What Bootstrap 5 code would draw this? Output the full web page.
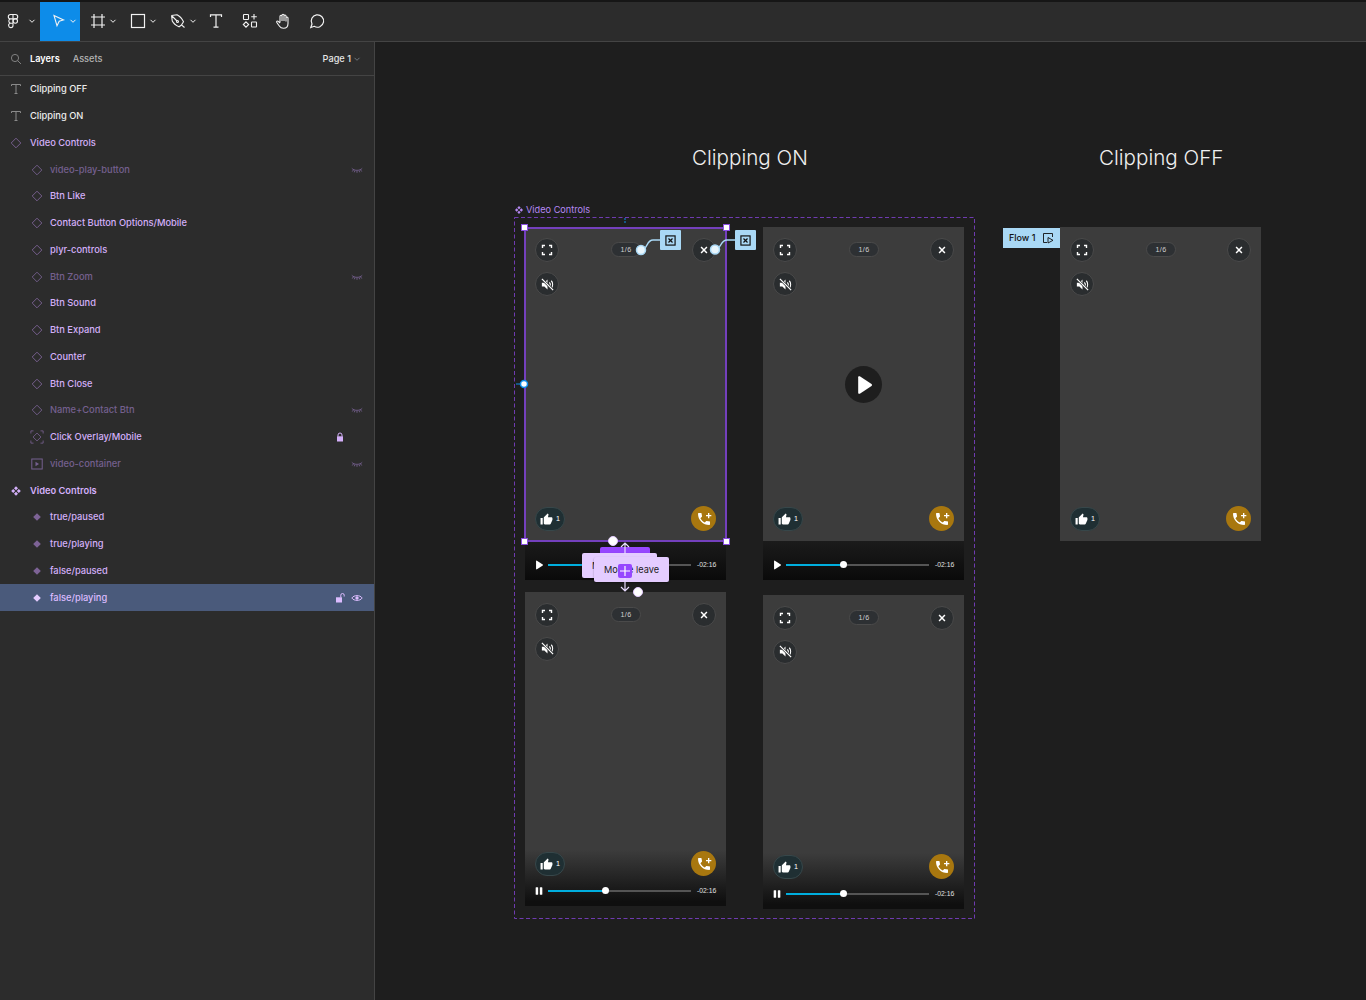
<!DOCTYPE html>
<html lang="en">
<head>
  <meta charset="UTF-8">
  <title>Video Controls - Figma</title>
  <link href="https://cdn.jsdelivr.net/npm/bootstrap@5.3.3/dist/css/bootstrap.min.css" rel="stylesheet">
  <style>
    body {
      font-family: "Inter", "Liberation Sans", sans-serif;
      background: #1e1e1e;
      width: 1366px;
      height: 1000px;
      overflow: hidden;
    }
    svg { display: block; flex: none; }
    .top-strip { height: 2px; background: #161616; }
    .toolbar { height: 40px; background: #2c2c2c; border-bottom: 1px solid #444; color: #f2f2f2; }
    .tool { width: 40px; height: 39px; padding: 0 0 2px 10px; gap: 3px; }
    .tool-logo { padding-left: 5px; gap: 7px; }
    .tool-active { background: #0d8ce9; }
    .tool-plain { width: 33.5px; padding-left: 0; justify-content: center; }
    .tool-t { margin-left: -.5px; }
    .app-body { height: 958px; }
    .side-panel { width: 375px; background: #2c2c2c; border-right: 1px solid #444; }
    .panel-head { height: 34px; border-bottom: 1px solid #444; font-size: 9.2px; padding: 1px 13px 0 10px; }
    .tab-on { color: #fff; font-weight: 600; margin-left: 8px; }
    .tab-off { color: #b5b5b5; font-weight: 500; margin-left: 13px; }
    .page-pick { color: #e6e6e6; font-weight: 500; }
    .chev-gap { margin-left: 2px; }
    .layer-row { height: 26.75px; padding-right: 11px; font-size: 9.3px; font-weight: 500; color: #d4b0fa; }
    .lvl-0 { padding-left: 10px; gap: 8px; }
    .lvl-1 { padding-left: 31px; gap: 7px; }
    .row-text { color: #ececec; }
    .row-text svg { color: #8a8a8a; }
    .row-hidden { color: #75608f; }
    .row-hidden svg { color: #75608f; }
    .row-icon { width: 12px; height: 12px; color: #d4b0fa; }
    .row-icon-wide { width: 14px; height: 14px; margin: 0 -1px; }
    .row-dim .row-icon { color: #7d6396; }
    .row-selected { background: #4a5a7b; color: #dcbcff; }
    .row-selected .row-icon { color: #e4ccff; }
    .row-bold { font-weight: 600; }
    .end-locked { margin-right: 17px; }
    .end-eye { margin-left: -2px; }
    .canvas-area { position: relative; flex: 1; }
    /* canvas coordinates are relative to the whole page, so pin the layer to 0,0 */
    .canvas-layer { position: absolute; left: -375px; top: -42px; width: 1366px; height: 1000px; }
    .canvas-title { position: absolute; top: 144.5px; font-size: 20.6px; font-weight: 300; color: #f0f0f0; line-height: 26px; white-space: nowrap; }
    .group-label { position: absolute; left: 514px; top: 204px; font-size: 9.2px; color: #b588f2; gap: 2px; line-height: 12px; }
    .vid-frame { position: absolute; width: 201px; height: 314px; background: #3c3c3c; }
    .vid-btn { position: absolute; width: 24px; height: 24px; border-radius: 50%; background: #2a2d2f; border: 1px solid #4a4a4a; color: #fff; }
    .vid-count { position: absolute; top: 15px; left: 86px; width: 30px; height: 15px; padding-top: 1px; border-radius: 8px; background: #2d3033; border: 1px solid #4a4a4a; color: #cfcfcf; font-family: "Liberation Sans", sans-serif; font-size: 7.2px; letter-spacing: .3px; }
    .vid-like { position: absolute; left: 10px; width: 30px; height: 24px; border-radius: 12px; background: #1f2f33; border: 1px solid #37474a; color: #fff; font-family: "Liberation Sans", sans-serif; font-size: 7.2px; gap: 3px; }
    .vid-call { position: absolute; left: 166px; width: 25px; height: 25px; border-radius: 50%; background: #a8770f; color: #fff; }
    .vid-big { position: absolute; left: 82px; top: 139px; width: 37px; height: 37px; border-radius: 50%; background: #1e1e1e; color: #fff; }
    .vid-bar { position: absolute; left: 0; width: 201px; }
    .bar-out { top: 314px; height: 39px; background: linear-gradient(#1b1b1b, #0a0a0a); }
    .bar-in { bottom: 0; height: 56px; background: linear-gradient(rgba(12,12,12,0), #0f0f0f 92%); }
    .bar-row { position: absolute; left: 9px; width: 182px; height: 10px; gap: 4px; color: #fff; }
    .bar-out .bar-row { top: 19px; }
    .bar-in .bar-row { bottom: 10px; }
    .track { position: relative; flex: 1; height: 2.5px; background: #555; }
    .track-fill { position: absolute; left: 0; top: 0; height: 100%; width: 40%; background: #00aede; }
    .track-knob { position: absolute; left: 40%; top: -2.5px; width: 7px; height: 7px; margin-left: -3.5px; border-radius: 50%; background: #fff; }
    .bar-time { width: 19px; font-family: "Liberation Sans", sans-serif; font-size: 6.8px; color: #e0e0e0; white-space: nowrap; margin-left: 2px; }
    .select-box { position: absolute; left: 524px; top: 227px; width: 203px; height: 315px; border: 2px solid #7440bd; }
    .handle { position: absolute; width: 7px; height: 7px; background: #fff; border: 1.5px solid #8a4fe0; }
    .wire-layer { position: absolute; left: 0; top: 0; }
    .proto-tag { position: absolute; width: 21px; height: 20px; border-radius: 1px; background: #a9d8f5; color: #111; }
    .flow-tag { position: absolute; left: 1003px; top: 228px; width: 57px; height: 20px; background: #a9d8f5; color: #111; font-size: 9px; font-weight: 500; padding-left: 6px; gap: 7px; }
    .drag-back { position: absolute; left: 600px; top: 547px; width: 50px; height: 10px; border-radius: 2px; background: #9747ff; }
    .drag-chip { position: absolute; height: 25px; border-radius: 2px; background: #e4ccff; color: #1c1c1c; font-size: 9.2px; white-space: nowrap; padding-left: 10px; box-shadow: 0 1px 2px rgba(0,0,0,.35); }
    .drag-plus { position: absolute; left: 618px; top: 564px; width: 14px; height: 14px; border-radius: 2px; background: #9747ff; color: #fff; }
  </style>
</head>
<body>

  <svg width="0" height="0" class="position-absolute">
    <defs>
      <symbol id="i-chev" viewBox="0 0 8 8"><path d="M1.500 2.800 4 5.300l2.500-2.500" fill="none" stroke="currentColor" stroke-width="1"/></symbol>
      <symbol id="i-text" viewBox="0 0 12 12"><path d="M1.500 3V1.500h9V3M6 1.500v9M4.500 10.500h3" fill="none" stroke="currentColor"/></symbol>
      <symbol id="i-dia" viewBox="0 0 12 12"><path d="M6 1.200 10.800 6 6 10.800 1.200 6z" fill="none" stroke="currentColor" stroke-width=".9"/></symbol>
      <symbol id="i-dia-fill" viewBox="0 0 12 12"><path d="M6 2.200 9.800 6 6 9.800 2.200 6z" fill="currentColor"/></symbol>
      <symbol id="i-comp" viewBox="0 0 12 12"><path d="M6 1.200 8 3.200 6 5.200 4 3.200zM6 6.800 8 8.800 6 10.800 4 8.800zM3.200 4 5.200 6 3.200 8 1.200 6zM8.800 4 10.800 6 8.800 8 6.800 6z" fill="currentColor"/></symbol>
      <symbol id="i-eye-off" viewBox="0 0 12 12"><path d="M.8 4.300C3 7 9 7 11.200 4.300M2.500 5.800 1.300 7.500M6 6.800v2M9.500 5.800l1.200 1.700M4 6.500l-.7 1.800M8 6.500l.7 1.800" fill="none" stroke="currentColor" stroke-width=".9"/></symbol>
      <symbol id="i-eye" viewBox="0 0 12 12"><path d="M.8 6C3 2.800 9 2.800 11.200 6 9 9.200 3 9.200.8 6z" fill="none" stroke="currentColor"/><circle cx="6" cy="6" r="1.700" fill="currentColor"/></symbol>
      <symbol id="i-lock" viewBox="0 0 12 12"><path d="M4 5.500V4a2 2 0 0 1 4 0v1.500" fill="none" stroke="currentColor"/><rect x="3" y="5.300" width="6" height="5.200" fill="currentColor"/></symbol>
      <symbol id="i-unlock" viewBox="0 0 12 12"><path d="M6.800 5.500V3.200a1.700 1.700 0 0 1 3.400 0V4.500" fill="none" stroke="currentColor"/><rect x="2" y="5.300" width="6" height="5.200" fill="currentColor"/></symbol>
      <symbol id="i-overlay" viewBox="0 0 16 16"><path d="M1 4V1h3M12 1h3v3M15 12v3h-3M4 15H1v-3" fill="none" stroke="currentColor" stroke-width=".9"/><path d="M8 3.500 12.500 8 8 12.500 3.500 8z" fill="none" stroke="currentColor" stroke-width=".9"/></symbol>
      <symbol id="i-video" viewBox="0 0 12 12"><rect x=".8" y="1" width="10.400" height="10" fill="none" stroke="currentColor"/><path d="M4.500 3.800 8 6 4.500 8.200z" fill="currentColor"/></symbol>
      <symbol id="i-expand" viewBox="0 0 12 12"><path d="M1.500 4V1.500H4M8 1.500h2.500V4M10.500 8v2.500H8M4 10.500H1.500V8" fill="none" stroke="currentColor" stroke-width="1.400"/></symbol>
      <symbol id="i-close" viewBox="0 0 12 12"><path d="M2.500 2.500 9.500 9.500M9.500 2.500 2.500 9.500" stroke="currentColor" stroke-width="1.800"/></symbol>
      <symbol id="i-mute" viewBox="0 0 24 24"><path d="M3 9v6h4l5 5V4L7 9z" fill="currentColor"/><path d="M15 8.500c1.600 1.800 1.600 5.200 0 7M18 6c3 3 3 9 0 12" fill="none" stroke="currentColor" stroke-width="1.700"/><path d="M3 3 21 21" stroke="#2a2d2f" stroke-width="4"/><path d="M3 3 21 21" stroke="currentColor" stroke-width="2"/></symbol>
      <symbol id="i-thumb" viewBox="0 0 24 24"><path fill="currentColor" d="M1 21h4V9H1v12zm22-11c0-1.100-.9-2-2-2h-6.310l.95-4.570.03-.32c0-.41-.17-.79-.44-1.060L14.170 1 7.590 7.590C7.220 7.950 7 8.450 7 9v10c0 1.100.9 2 2 2h9c.83 0 1.540-.5 1.840-1.220l3.020-7.050c.09-.23.14-.47.14-.73v-2z"/></symbol>
      <symbol id="i-phone" viewBox="0 0 24 24"><path fill="currentColor" d="M6.620 10.790c1.440 2.830 3.760 5.140 6.590 6.590l2.200-2.200c.27-.27.67-.36 1.020-.24 1.120.37 2.330.57 3.570.57.55 0 1 .45 1 1V20c0 .55-.45 1-1 1-9.390 0-17-7.610-17-17 0-.55.45-1 1-1h3.500c.55 0 1 .45 1 1 0 1.250.2 2.450.57 3.570.11.35.03.74-.25 1.020l-2.200 2.200zM15 6h3V3h2v3h3v2h-3v3h-2V8h-3z"/></symbol>
      <symbol id="i-play" viewBox="0 0 12 12"><path d="M2.500 1.300c0-.5.5-.8 1-.5l7 4.600c.4.300.4.900 0 1.200l-7 4.600c-.5.300-1 0-1-.5z" fill="currentColor"/></symbol>
      <symbol id="i-pause" viewBox="0 0 12 12"><rect x="2" y="1.500" width="3" height="9" rx=".5" fill="currentColor"/><rect x="7" y="1.500" width="3" height="9" rx=".5" fill="currentColor"/></symbol>
      <symbol id="i-target" viewBox="0 0 12 12"><rect x="1" y="1" width="10" height="10" fill="none" stroke="currentColor" stroke-width="1.300"/><path d="M3.800 3.800 8.200 8.200M8.200 3.800 3.800 8.200" stroke="currentColor" stroke-width="1.300"/></symbol>
    </defs>
  </svg>

  <div class="top-strip"></div>

  <div class="toolbar d-flex">
    <div class="tool tool-logo d-flex align-items-center">
      <svg width="16" height="16" viewBox="0 0 16 16" fill="none" stroke="currentColor" stroke-width="1.100"><path d="M8 1.500H5.500a2.200 2.200 0 0 0 0 4.400H8zM8 5.900H5.500a2.200 2.200 0 0 0 0 4.300H8zM8 10.200H5.500A2.200 2.200 0 1 0 8 12.400zM8 1.500h2.500a2.200 2.200 0 0 1 0 4.400H8z"/><circle cx="10.300" cy="8" r="2.200"/></svg>
      <svg width="8" height="8"><use href="#i-chev"/></svg>
    </div>
    <div class="tool tool-active d-flex align-items-center">
      <svg width="16" height="16" viewBox="0 0 16 16" fill="none" stroke="currentColor" stroke-width="1.100"><path d="M4 2.500 13.500 7l-4.300 1.300L7 12.800z"/></svg>
      <svg width="8" height="8"><use href="#i-chev"/></svg>
    </div>
    <div class="tool d-flex align-items-center">
      <svg width="16" height="16" viewBox="0 0 16 16" fill="none" stroke="currentColor" stroke-width="1.200"><path d="M4 1v14M12 1v14M1 4h14M1 12h14"/></svg>
      <svg width="8" height="8"><use href="#i-chev"/></svg>
    </div>
    <div class="tool d-flex align-items-center">
      <svg width="16" height="16" viewBox="0 0 16 16" fill="none" stroke="currentColor" stroke-width="1.200"><rect x="1.500" y="1.500" width="13" height="13"/></svg>
      <svg width="8" height="8"><use href="#i-chev"/></svg>
    </div>
    <div class="tool d-flex align-items-center">
      <svg width="16" height="16" viewBox="0 0 16 16" fill="none" stroke="currentColor" stroke-width="1.100"><path d="M1.500 2.500 7 1.800c2.500 1.200 5 3.800 6.500 7l-2 3.200L14.500 14.500M1.500 2.500l.8 5.500c1.200 2.500 3.800 4.500 6.700 5.800l2.500-1.800M1.500 2.500 7 8"/><circle cx="7.500" cy="8.500" r="1"/></svg>
      <svg width="8" height="8"><use href="#i-chev"/></svg>
    </div>
    <div class="tool tool-plain tool-t d-flex align-items-center">
      <svg width="16" height="16" viewBox="0 0 16 16" fill="none" stroke="currentColor" stroke-width="1.200"><path d="M2.500 4V1.800h11V4M8 1.800v12.400M5.500 14.200h5"/></svg>
    </div>
    <div class="tool tool-plain d-flex align-items-center">
      <svg width="16" height="16" viewBox="0 0 16 16" fill="none" stroke="currentColor" stroke-width="1.100"><rect x="1.500" y="1.500" width="5" height="5" rx=".6"/><path d="M12 1v5.500M9.200 3.800h5.600"/><path d="M4 8.800 6.700 11.500 4 14.200 1.300 11.500z"/><rect x="9.500" y="9" width="5" height="5" rx=".6"/></svg>
    </div>
    <div class="tool tool-plain d-flex align-items-center">
      <svg width="16" height="16" viewBox="0 0 16 16" fill="none" stroke="currentColor" stroke-width="1.100"><path d="M5 9.500V3.300a1 1 0 0 1 2 0V8M7 8V2.200a1 1 0 0 1 2 0V8M9 8V3a1 1 0 0 1 2 0v5.500M11 8.500V5a1 1 0 0 1 2 0v5.500c0 3-2 4.800-4.500 4.800-2 0-3.200-.8-4.200-2.300L1.800 9.500c-.7-1 .6-2 1.500-1.200L5 10"/></svg>
    </div>
    <div class="tool tool-plain d-flex align-items-center">
      <svg width="16" height="16" viewBox="0 0 16 16" fill="none" stroke="currentColor" stroke-width="1.200"><path d="M1.800 14.500 3 11a6.200 6.200 0 1 1 2.200 2.300z"/></svg>
    </div>
  </div>

  <div class="app-body d-flex">
    <aside class="side-panel flex-shrink-0">
      <div class="panel-head d-flex align-items-center">
        <svg width="12" height="12" viewBox="0 0 12 12" fill="none" stroke="#8a8a8a" stroke-width=".9"><circle cx="5" cy="5" r="3.600"/><path d="M7.700 7.700 11 11"/></svg>
        <span class="tab-on">Layers</span>
        <span class="tab-off">Assets</span>
        <span class="page-pick ms-auto">Page 1</span>
        <svg width="8" height="8" class="chev-gap text-secondary"><use href="#i-chev"/></svg>
      </div>
      <div id="layerList"></div>
    </aside>

    <main class="canvas-area">
      <div class="canvas-layer" id="canvas">
        <div class="canvas-title" style="left:692px">Clipping ON</div>
        <div class="canvas-title" style="left:1099px">Clipping OFF</div>

        <div class="group-label d-flex align-items-center">
          <svg width="10" height="10"><use href="#i-comp"/></svg>
          <span>Video Controls</span>
        </div>
      </div>
    </main>
  </div>

  <script src="https://cdn.jsdelivr.net/npm/bootstrap@5.3.3/dist/js/bootstrap.bundle.min.js"></script>
  <script>
    // [name, level, icon, style, end icons]
    const layers = [
      ["Clipping OFF", 0, "i-text", "row-text"],
      ["Clipping ON", 0, "i-text", "row-text"],
      ["Video Controls", 0, "i-dia", "row-dim"],
      ["video-play-button", 1, "i-dia", "row-hidden", "hidden"],
      ["Btn Like", 1, "i-dia", "row-dim"],
      ["Contact Button Options/Mobile", 1, "i-dia", "row-dim"],
      ["plyr-controls", 1, "i-dia", "row-dim"],
      ["Btn Zoom", 1, "i-dia", "row-hidden", "hidden"],
      ["Btn Sound", 1, "i-dia", "row-dim"],
      ["Btn Expand", 1, "i-dia", "row-dim"],
      ["Counter", 1, "i-dia", "row-dim"],
      ["Btn Close", 1, "i-dia", "row-dim"],
      ["Name+Contact Btn", 1, "i-dia", "row-hidden", "hidden"],
      ["Click Overlay/Mobile", 1, "i-overlay", "row-dim", "locked"],
      ["video-container", 1, "i-video", "row-hidden", "hidden"],
      ["Video Controls", 0, "i-comp", "row-bold"],
      ["true/paused", 1, "i-dia-fill", "row-dim"],
      ["true/playing", 1, "i-dia-fill", "row-dim"],
      ["false/paused", 1, "i-dia-fill", "row-dim"],
      ["false/playing", 1, "i-dia-fill", "row-selected", "selected"]
    ];

    function endIcons(kind) {
      if (kind === "hidden") return '<svg class="ms-auto" width="12" height="12"><use href="#i-eye-off"/></svg>';
      if (kind === "locked") return '<svg class="ms-auto end-locked" width="12" height="12"><use href="#i-lock"/></svg>';
      if (kind === "selected") return '<svg class="ms-auto" width="12" height="12"><use href="#i-unlock"/></svg><svg class="end-eye" width="12" height="12"><use href="#i-eye"/></svg>';
      return "";
    }

    document.getElementById("layerList").innerHTML = layers.map(([name, lvl, icon, cls, end]) => {
      const wide = icon === "i-overlay" ? " row-icon-wide" : "";
      return `<div class="layer-row lvl-${lvl} ${cls} d-flex align-items-center">
        <svg class="row-icon${wide}"><use href="#${icon}"/></svg>
        <span>${name}</span>${endIcons(end)}
      </div>`;
    }).join("");

    function icon(id, size) {
      return `<svg width="${size}" height="${size}"><use href="#${id}"/></svg>`;
    }

    // frames on the free canvas: x, y, control bar (none / out / in), big play button
    const frames = [
      { x: 525, y: 227, bar: "out", state: "i-play" },
      { x: 763, y: 227, bar: "out", state: "i-play", big: true },
      { x: 525, y: 592, bar: "in", state: "i-pause" },
      { x: 763, y: 595, bar: "in", state: "i-pause" },
      { x: 1060, y: 227, bar: "none" }
    ];

    function frameHtml(f) {
      const inside = f.bar === "in";
      const lowY = inside ? 260 : 280;
      const callY = inside ? 259 : 279;
      const topY = inside ? 10.5 : 11;
      const big = f.big ? `<div class="vid-big d-flex align-items-center justify-content-center">${icon("i-play", 20)}</div>` : "";
      const bar = f.bar === "none" ? "" : `<div class="vid-bar bar-${f.bar}">
          <div class="bar-row d-flex align-items-center">
            ${icon(f.state, 10)}
            <div class="track"><div class="track-fill"></div><div class="track-knob"></div></div>
            <span class="bar-time">-02:16</span>
          </div>
        </div>`;
      return `<div class="vid-frame" style="left:${f.x}px;top:${f.y}px">
        ${bar}
        <div class="vid-btn d-flex align-items-center justify-content-center" style="left:10px;top:${topY}px">${icon("i-expand", 12)}</div>
        <div class="vid-count d-flex align-items-center justify-content-center">1/6</div>
        <div class="vid-btn d-flex align-items-center justify-content-center" style="left:167px;top:${topY}px">${icon("i-close", 10)}</div>
        <div class="vid-btn d-flex align-items-center justify-content-center" style="left:10px;top:${topY + 34}px">${icon("i-mute", 15)}</div>
        ${big}
        <div class="vid-like d-flex align-items-center justify-content-center" style="top:${lowY}px">${icon("i-thumb", 13)}<span>1</span></div>
        <div class="vid-call d-flex align-items-center justify-content-center" style="top:${callY}px">${icon("i-phone", 16)}</div>
      </div>`;
    }

    // selection, prototype wires and the hover chips sit on top of the frames
    const handles = [[521, 224], [723, 224], [521, 538], [723, 538]];
    const overlay = `
      <svg class="wire-layer" width="1366" height="1000" fill="none">
        <rect x="514.500" y="217.500" width="460" height="701" stroke="#6f3bb0" stroke-dasharray="4 2.500"/>
      </svg>
      <div class="select-box"></div>
      ${handles.map(h => `<div class="handle" style="left:${h[0]}px;top:${h[1]}px"></div>`).join("")}
      <div class="proto-tag d-flex align-items-center justify-content-center" style="left:660px;top:230px">${icon("i-target", 11)}</div>
      <div class="proto-tag d-flex align-items-center justify-content-center" style="left:735px;top:230px">${icon("i-target", 11)}</div>
      <div class="flow-tag d-flex align-items-center">
        <span>Flow 1</span>
        <svg width="12" height="12" viewBox="0 0 12 12" fill="none" stroke="#111" stroke-width=".9"><path d="M5 10.500H1.500v-9h9V5"/><path d="M6 5.500 11 8.300 6 11z"/></svg>
      </div>
      <div class="drag-back"></div>
      <div class="drag-chip d-flex align-items-center" style="left:582px;top:553px;width:75px">M</div>
      <div class="drag-chip d-flex align-items-center" style="left:594px;top:557px;width:75px">Mouse leave</div>
      <div class="drag-plus d-flex align-items-center justify-content-center">
        <svg width="10" height="10" viewBox="0 0 10 10"><path d="M5 0v10M0 5h10" stroke="#fff" stroke-width="1.200"/></svg>
      </div>
      <svg class="wire-layer" width="1366" height="1000" fill="none">
        <path d="M625 218v6" stroke="#0d8ce9" stroke-dasharray="2 1"/>
        <path d="M516 384h8" stroke="#0d8ce9"/>
        <circle cx="524" cy="384" r="3.500" fill="#fff" stroke="#0d8ce9" stroke-width="1.500"/>
        <path d="M641 250c7 0 5-10 12-10h8M715 249c7 0 5-9 12-9h9" stroke="#a9d8f5" stroke-width="1.500"/>
        <circle cx="641" cy="250" r="4.500" fill="#e9f6fd" stroke="#a9d8f5" stroke-width="1.500"/>
        <circle cx="715" cy="249.500" r="4.500" fill="#e9f6fd" stroke="#a9d8f5" stroke-width="1.500"/>
        <path d="M625 554v-11M621 547l4-4 4 4M625 578v13M621 587l4 4 4-4" stroke="#e9dcff" stroke-width="1.200"/>
        <circle cx="613" cy="541" r="4.500" fill="#fff" stroke="#e4ccff"/>
        <circle cx="638" cy="592" r="4.500" fill="#fff" stroke="#e4ccff"/>
      </svg>`;

    document.getElementById("canvas").insertAdjacentHTML("beforeend", frames.map(frameHtml).join("") + overlay);
  </script>

</body>
</html>
